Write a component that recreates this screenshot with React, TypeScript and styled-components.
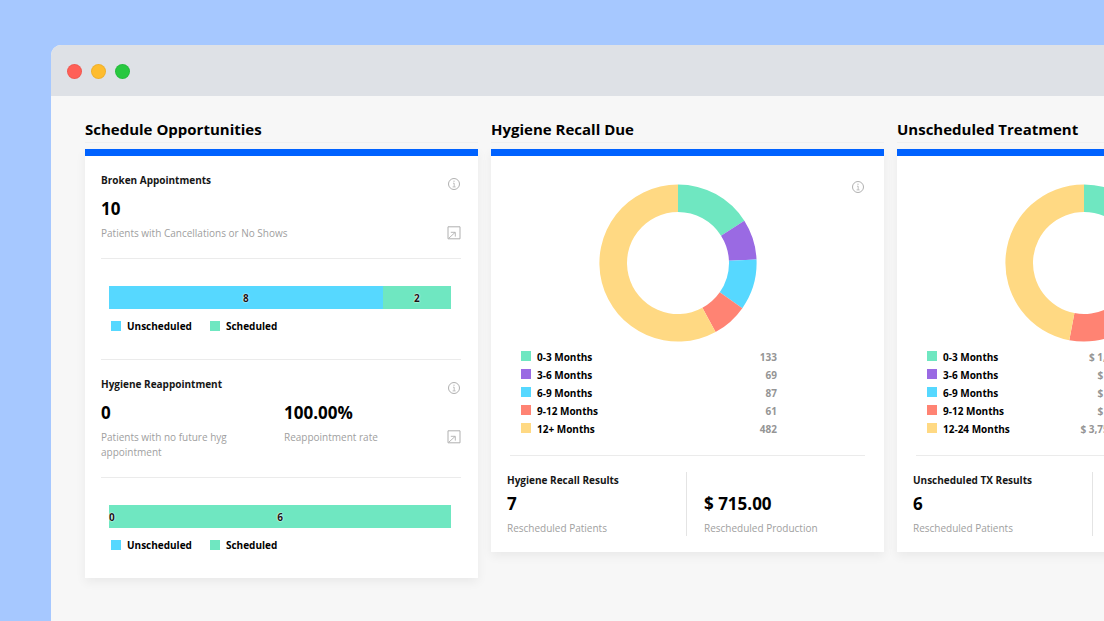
import React from "react";
import styled, { createGlobalStyle } from "styled-components";

const GlobalStyle = createGlobalStyle`
  *, *::before, *::after { box-sizing: border-box; }
  body {
    margin: 0;
    background: #a6c8ff;
    font-family: "Open Sans", sans-serif;
    color: #000;
  }
  h1, h2, h3, p, ul, dl, dd { margin: 0; padding: 0; }
`;

const C = {
  green: "#6fe7c1",
  purple: "#9a6ae3",
  blue: "#56d8ff",
  coral: "#ff8373",
  yellow: "#ffd983",
};

const Page = styled.div`
  min-height: 100vh;
  padding: 45px 0 0 51px;
  display: flex;
  overflow: hidden;
`;

const Browser = styled.div`
  flex: 1;
  min-width: 0;
  border-top-left-radius: 10px;
  background: #f7f7f7;
  overflow: hidden;
`;

const TitleBar = styled.div`
  display: flex;
  align-items: center;
  gap: 9px;
  height: 51px;
  padding: 1px 0 0 16px;
  background: #dee1e6;
`;

const Light = styled.span<{ $color: string }>`
  width: 15px;
  height: 15px;
  border-radius: 50%;
  background: ${(p) => p.$color};
  border: 1px solid rgba(0, 0, 0, 0.06);
`;

const Board = styled.main`
  display: grid;
  grid-template-columns: repeat(3, minmax(0, 1fr));
  align-items: start;
  gap: 13px;
  width: calc(100% + 186px);
  padding: 22px 0 42px 34px;
`;

const ColumnTitle = styled.h2`
  height: 25px;
  margin-bottom: 6px;
  border-bottom: 1px solid #f0f0f0;
  font-size: 15px;
  line-height: 23px;
  font-weight: 700;
`;

const Card = styled.div`
  border-top: 7px solid #0062ff;
  background: #fff;
  box-shadow: 0 4px 10px rgba(0, 0, 0, 0.06);
`;

const StackCard = styled(Card)`
  padding: 0 17px 25px 16px;
`;

const Block = styled.section`
  display: flex;
  justify-content: space-between;
  padding: 16px 0 17px;
  border-bottom: 1px solid #ebebeb;
`;

const BlockMain = styled.div`
  flex: 1;
  min-width: 0;
`;

const Heading = styled.h3`
  font-size: 10px;
  line-height: 16px;
  font-weight: 700;
  color: #161616;
`;

const Stats = styled.div<{ $split: boolean }>`
  display: grid;
  grid-template-columns: ${(p) => (p.$split ? "183px 1fr" : "1fr")};
  margin-top: 8px;
`;

const Stat = styled.div`
  padding-right: 40px;
`;

const Figure = styled.p`
  font-size: 17px;
  line-height: 26px;
  font-weight: 700;
`;

const Caption = styled.p`
  margin-top: 4px;
  font-size: 10px;
  line-height: 15px;
  color: #a0a0a0;
`;

const Actions = styled.div`
  flex: none;
  display: flex;
  flex-direction: column;
  gap: 35px;
  padding-top: 5px;
`;

const IconButton = styled.button`
  display: block;
  width: 14px;
  height: 14px;
  padding: 0;
  border: 0;
  background: none;
  color: #b0b0b0;
  cursor: pointer;
  svg { display: block; }
`;

const BarSection = styled.div<{ $divided?: boolean }>`
  padding: 27px 0 0;
  height: ${(p) => (p.$divided ? "101px" : "auto")};
  border-bottom: ${(p) => (p.$divided ? "1px solid #ebebeb" : "0")};
`;

const Bar = styled.div`
  display: flex;
  height: 23px;
  margin: 0 10px 0 8px;
`;

const Segment = styled.div<{ $grow: number; $color: string }>`
  flex: ${(p) => p.$grow} 0 0;
  min-width: 0;
  z-index: ${(p) => (p.$grow === 0 ? 1 : 0)};
  display: flex;
  align-items: center;
  justify-content: safe center;
  background: ${(p) => p.$color};
  font-size: 10px;
  line-height: 16px;
  font-weight: 700;
  color: #161616;
  text-shadow: 0 0 2px #fff, 0 0 1px #fff;
`;

const BarKey = styled.ul`
  display: flex;
  gap: 18px;
  margin-top: 9px;
  padding-left: 10px;
  list-style: none;
`;

const KeyItem = styled.li`
  display: flex;
  align-items: center;
  gap: 6px;
  font-size: 10px;
  line-height: 16px;
  font-weight: 700;
`;

const Swatch = styled.span<{ $color: string }>`
  display: inline-block;
  flex: none;
  width: 10px;
  height: 10px;
  background: ${(p) => p.$color};
`;

const ChartArea = styled.div`
  display: grid;
  grid-template-columns: 1fr auto 1fr;
  padding: 24px 19px 0 0;
`;

const InfoSlot = styled.div`
  grid-column: 3;
  justify-self: end;
`;

const DonutSvg = styled.svg`
  grid-column: 2;
  display: block;
  margin-top: 4px;
`;

const Legend = styled.table<{ $width: number }>`
  width: ${(p) => p.$width}px;
  margin: 6px 0 0 30px;
  border-collapse: collapse;
  font-size: 10px;
  line-height: 18px;
  font-weight: 700;

  tr { height: 18px; }
  th, td { padding: 0; white-space: nowrap; }
  th { text-align: left; }
  td { text-align: right; color: #959595; }
  th span { margin-right: 6px; }
`;

const Results = styled.section`
  display: flex;
  margin: 0 16px;
  padding: 16px 0;
`;

const ResultCell = styled.div<{ $divided?: boolean }>`
  display: flex;
  flex-direction: column;
  justify-content: flex-end;
  height: 64px;
  width: ${(p) => (p.$divided ? "180px" : "auto")};
  margin-right: ${(p) => (p.$divided ? "17px" : "0")};
  border-right: ${(p) => (p.$divided ? "1px solid #e4e4e4" : "0")};

  ${Heading} { margin-bottom: 3px; }
`;

const Rule = styled.hr`
  height: 1px;
  margin: 17px 19px 0;
  border: 0;
  background: #ebebeb;
`;

function InfoIcon() {
  return (
    <IconButton type="button" aria-label="Information">
      <svg width="14" height="14" viewBox="0 0 14 14" fill="none" stroke="currentColor">
        <circle cx="7" cy="7" r="5.5" />
        <path d="M6 6.2h1.2v3.6M5.6 9.9h3" strokeWidth="0.8" />
        <circle cx="7" cy="4.2" r="0.6" fill="currentColor" stroke="none" />
      </svg>
    </IconButton>
  );
}

function OpenIcon() {
  return (
    <IconButton type="button" aria-label="Open list">
      <svg width="14" height="14" viewBox="0 0 14 14" fill="none" stroke="currentColor">
        <path d="M1 .8h12v12H1z" />
        <path d="M2 12L8 6.5M3.8 6.3h4.5v4.3" strokeWidth="0.9" />
      </svg>
    </IconButton>
  );
}

type Slice = { label: string; value: string; share: number; color: string };

function Donut({ slices }: { slices: Slice[] }) {
  const total = slices.reduce((sum, s) => sum + s.share, 0);
  const point = (r: number, t: number) =>
    `${79 + r * Math.sin(t * 2 * Math.PI)} ${79 - r * Math.cos(t * 2 * Math.PI)}`;
  let start = 0;
  return (
    <DonutSvg width="158" height="158" viewBox="0 0 158 158" role="img" aria-label="Share by age">
      {slices.map((s) => {
        const a = start / total;
        start += s.share;
        const b = start / total;
        const large = b - a > 0.5 ? 1 : 0;
        return (
          <path
            key={s.label}
            fill={s.color}
            d={`M${point(78.6, a)}A78.6 78.6 0 ${large} 1 ${point(78.6, b)}L${point(51, b)}A51 51 0 ${large} 0 ${point(51, a)}Z`}
          />
        );
      })}
    </DonutSvg>
  );
}

function BarChart({ unscheduled, scheduled, divided }: { unscheduled: number; scheduled: number; divided?: boolean }) {
  return (
    <BarSection $divided={divided}>
      <Bar>
        <Segment $grow={unscheduled} $color={C.blue}>{unscheduled}</Segment>
        <Segment $grow={scheduled} $color={C.green}>{scheduled}</Segment>
      </Bar>
      <BarKey>
        <KeyItem><Swatch $color={C.blue} />Unscheduled</KeyItem>
        <KeyItem><Swatch $color={C.green} />Scheduled</KeyItem>
      </BarKey>
    </BarSection>
  );
}

type Metric = { figure: string; caption: string };

function StatBlock({ title, metrics }: { title: string; metrics: Metric[] }) {
  return (
    <Block>
      <BlockMain>
        <Heading>{title}</Heading>
        <Stats $split={metrics.length > 1}>
          {metrics.map((m) => (
            <Stat key={m.caption}>
              <Figure>{m.figure}</Figure>
              <Caption>{m.caption}</Caption>
            </Stat>
          ))}
        </Stats>
      </BlockMain>
      <Actions>
        <InfoIcon />
        <OpenIcon />
      </Actions>
    </Block>
  );
}

type DonutColumnProps = {
  title: string;
  slices: Slice[];
  legendWidth: number;
  results: string;
  patients: string;
  production: string;
};

function DonutColumn({ title, slices, legendWidth, results, patients, production }: DonutColumnProps) {
  return (
    <section>
      <ColumnTitle>{title}</ColumnTitle>
      <Card>
        <ChartArea>
          <Donut slices={slices} />
          <InfoSlot><InfoIcon /></InfoSlot>
        </ChartArea>
        <Legend $width={legendWidth}>
          <tbody>
            {slices.map((s) => (
              <tr key={s.label}>
                <th scope="row"><Swatch $color={s.color} />{s.label}</th>
                <td>{s.value}</td>
              </tr>
            ))}
          </tbody>
        </Legend>
        <Rule />
        <Results>
          <ResultCell $divided>
            <Heading>{results}</Heading>
            <Figure>{patients}</Figure>
            <Caption>Rescheduled Patients</Caption>
          </ResultCell>
          <ResultCell>
            <Figure>{production}</Figure>
            <Caption>Rescheduled Production</Caption>
          </ResultCell>
        </Results>
      </Card>
    </section>
  );
}

const recall: Slice[] = [
  { label: "0-3 Months", value: "133", share: 133, color: C.green },
  { label: "3-6 Months", value: "69", share: 69, color: C.purple },
  { label: "6-9 Months", value: "87", share: 87, color: C.blue },
  { label: "9-12 Months", value: "61", share: 61, color: C.coral },
  { label: "12+ Months", value: "482", share: 482, color: C.yellow },
];

const treatment: Slice[] = [
  { label: "0-3 Months", value: "$ 1,240", share: 16, color: C.green },
  { label: "3-6 Months", value: "$ 640", share: 8, color: C.purple },
  { label: "6-9 Months", value: "$ 640", share: 8, color: C.blue },
  { label: "9-12 Months", value: "$ 980", share: 21, color: C.coral },
  { label: "12-24 Months", value: "$ 3,750.5", share: 47, color: C.yellow },
];

export default function App() {
  return (
    <>
      <GlobalStyle />
      <Page>
        <Browser>
          <TitleBar>
            <Light $color="#ff5f57" />
            <Light $color="#febc2e" />
            <Light $color="#28c840" />
          </TitleBar>
          <Board>
            <section>
              <ColumnTitle>Schedule Opportunities</ColumnTitle>
              <StackCard>
                <StatBlock
                  title="Broken Appointments"
                  metrics={[{ figure: "10", caption: "Patients with Cancellations or No Shows" }]}
                />
                <BarChart unscheduled={8} scheduled={2} divided />
                <StatBlock
                  title="Hygiene Reappointment"
                  metrics={[
                    { figure: "0", caption: "Patients with no future hyg appointment" },
                    { figure: "100.00%", caption: "Reappointment rate" },
                  ]}
                />
                <BarChart unscheduled={0} scheduled={6} />
              </StackCard>
            </section>
            <DonutColumn
              title="Hygiene Recall Due"
              slices={recall}
              legendWidth={256}
              results="Hygiene Recall Results"
              patients="7"
              production="$ 715.00"
            />
            <DonutColumn
              title="Unscheduled Treatment"
              slices={treatment}
              legendWidth={196}
              results="Unscheduled TX Results"
              patients="6"
              production="$ 850.00"
            />
          </Board>
        </Browser>
      </Page>
    </>
  );
}
